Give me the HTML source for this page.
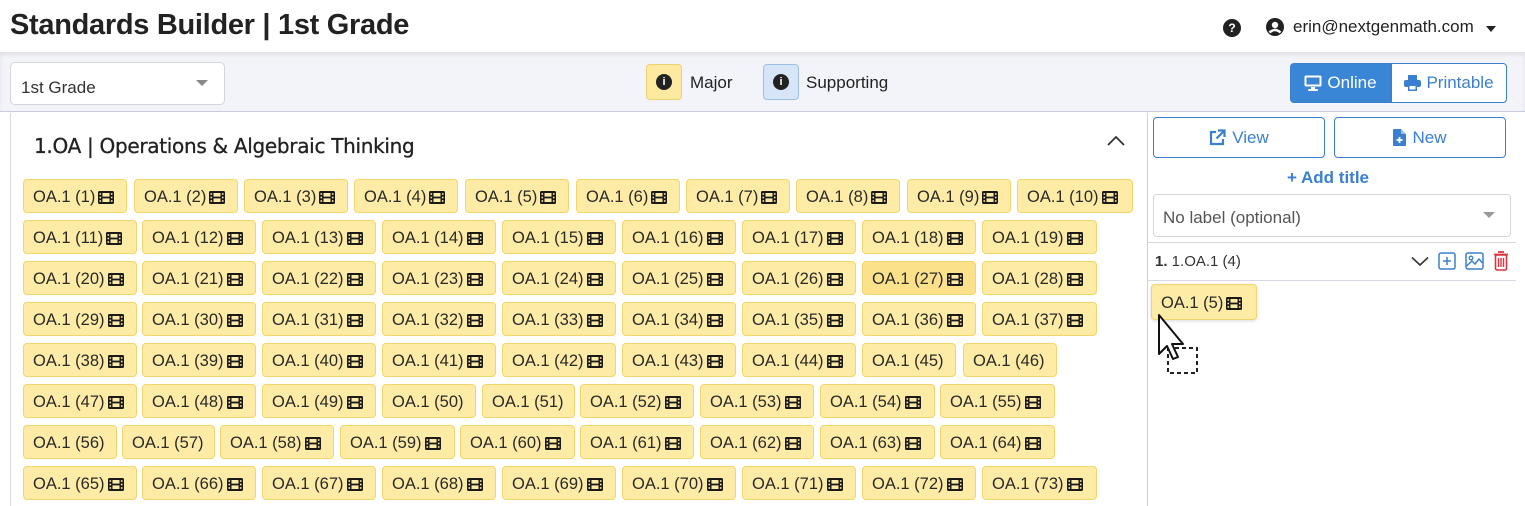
<!DOCTYPE html>
<html><head><meta charset="utf-8"><style>
*{box-sizing:border-box;margin:0;padding:0}
body{width:1525px;height:506px;overflow:hidden;background:#fff;font-family:"Liberation Sans",sans-serif;color:#222;position:relative}
.abs{position:absolute}
.b{position:absolute;height:34px;background:#fdeba6;border:1px solid #f3d56a;border-radius:4px;display:flex;align-items:center;padding-left:9px;padding-top:2px;font-size:16.5px;color:#2a2a2a;white-space:nowrap}
.b.h{background:#fbe18a}
.b svg{margin-left:3px}
.btn{position:absolute;border:1px solid #3a7fd0;border-radius:4px;color:#3a7fd0;font-size:17px;display:flex;align-items:center;justify-content:center;gap:6px;background:#fff}
</style></head><body>
<svg width="0" height="0" style="position:absolute"><defs><symbol id="f" viewBox="0 0 16 13"><rect x="0" y="0" width="16" height="13" rx="1.5" fill="#1a1a1a"/><rect x="4.5" y="2" width="7" height="3.6" fill="#fdeba6"/><rect x="4.5" y="7.4" width="7" height="3.6" fill="#fdeba6"/><rect x="1.5" y="2.2" width="1.6" height="1.6" fill="#fdeba6"/><rect x="1.5" y="5.7" width="1.6" height="1.6" fill="#fdeba6"/><rect x="1.5" y="9.2" width="1.6" height="1.6" fill="#fdeba6"/><rect x="12.9" y="2.2" width="1.6" height="1.6" fill="#fdeba6"/><rect x="12.9" y="5.7" width="1.6" height="1.6" fill="#fdeba6"/><rect x="12.9" y="9.2" width="1.6" height="1.6" fill="#fdeba6"/></symbol></defs></svg>

<div class="abs" style="left:10px;top:9px;font-size:29px;color:#222;font-family:'Liberation Sans',sans-serif;font-weight:bold;letter-spacing:-0.3px">Standards Builder | 1st Grade</div>
<div class="abs" style="left:1223px;top:19px;width:18px;height:18px;border-radius:50%;background:#222;color:#fff;font-size:12px;font-weight:bold;text-align:center;line-height:18px">?</div>
<svg class="abs" style="left:1266px;top:18px" width="18" height="18" viewBox="0 0 18 18"><circle cx="9" cy="9" r="9" fill="#222"/><circle cx="9" cy="7" r="3.2" fill="#fff"/><path d="M3.5 14.5 Q9 9.5 14.5 14.5" stroke="#fff" stroke-width="2.5" fill="none"/></svg>
<div class="abs" style="left:1293px;top:17px;font-size:17px;color:#222">erin@nextgenmath.com</div>
<div class="abs" style="left:1486px;top:26px;border-left:5px solid transparent;border-right:5px solid transparent;border-top:6px solid #222"></div>

<div class="abs" style="left:0;top:52px;width:1525px;height:60px;background:#f3f4f9;box-shadow:inset 0 3px 4px rgba(0,0,0,.08);border-bottom:1px solid #c9cbe0"></div>
<div class="abs" style="left:10px;top:62px;width:215px;height:43px;background:#fff;border:1px solid #d5d5da;border-radius:5px;font-size:17px;padding:15px 0 0 10px;color:#333">1st Grade</div>
<div class="abs" style="left:196px;top:80px;border-left:6px solid transparent;border-right:6px solid transparent;border-top:6px solid #888"></div>
<div class="abs" style="left:646px;top:64px;width:36px;height:36px;background:#fde9a0;border:1px solid #ecd070;border-radius:4px"></div>
<div class="abs" style="left:656px;top:74px;width:16px;height:16px;border-radius:50%;background:#222;color:#fff;font-size:11px;font-weight:bold;text-align:center;line-height:16px">i</div>
<div class="abs" style="left:690px;top:73px;font-size:17px">Major</div>
<div class="abs" style="left:763px;top:64px;width:36px;height:36px;background:#d6e6f8;border:1px solid #9fbfe2;border-radius:4px"></div>
<div class="abs" style="left:773px;top:74px;width:16px;height:16px;border-radius:50%;background:#222;color:#fff;font-size:11px;font-weight:bold;text-align:center;line-height:16px">i</div>
<div class="abs" style="left:806px;top:73px;font-size:17px">Supporting</div>

<div class="abs" style="left:1290px;top:63px;width:101px;height:40px;background:#3a86d6;border:1px solid #3a7fd0;border-radius:4px 0 0 4px;color:#fff;font-size:17px;display:flex;align-items:center;justify-content:center;gap:5px"><svg width="18" height="16" viewBox="0 0 18 16"><rect x="0.5" y="0.5" width="17" height="11" rx="1.5" fill="#fff"/><rect x="2.5" y="2.5" width="13" height="7" fill="#3a86d6"/><rect x="7" y="12" width="4" height="2" fill="#fff"/><rect x="4" y="14" width="10" height="2" rx="1" fill="#fff"/></svg>Online</div>
<div class="abs" style="left:1391px;top:63px;width:116px;height:40px;background:#fff;border:1px solid #3a7fd0;border-radius:0 4px 4px 0;color:#3a7fd0;font-size:17px;display:flex;align-items:center;justify-content:center;gap:5px"><svg width="17" height="16" viewBox="0 0 17 16"><rect x="4" y="0" width="9" height="5" fill="#3a7fd0"/><rect x="0" y="5" width="17" height="7" rx="2" fill="#3a7fd0"/><rect x="4" y="10" width="9" height="6" fill="#3a7fd0"/><rect x="5.5" y="11" width="6" height="3.5" fill="#fff"/></svg>Printable</div>

<div class="abs" style="left:10px;top:113px;width:1138px;height:393px;background:#fff;border-left:1px solid #d8d8e0;border-right:1px solid #d0d0d8"></div>
<div class="abs" style="left:34px;top:134px;font-size:20px;font-family:'DejaVu Sans',sans-serif;color:#222;letter-spacing:-0.3px;-webkit-text-stroke:0.3px #222">1.OA | Operations &amp; Algebraic Thinking</div>
<svg class="abs" style="left:1106px;top:135px" width="20" height="12" viewBox="0 0 20 12"><path d="M2 10 L10 2 L18 10" stroke="#333" stroke-width="1.8" fill="none"/></svg>

<div class="b" style="left:23px;top:179px;width:104px">OA.1 (1)<svg width="16" height="13"><use href="#f"/></svg></div>
<div class="b" style="left:134px;top:179px;width:104px">OA.1 (2)<svg width="16" height="13"><use href="#f"/></svg></div>
<div class="b" style="left:244px;top:179px;width:104px">OA.1 (3)<svg width="16" height="13"><use href="#f"/></svg></div>
<div class="b" style="left:354px;top:179px;width:104px">OA.1 (4)<svg width="16" height="13"><use href="#f"/></svg></div>
<div class="b" style="left:465px;top:179px;width:104px">OA.1 (5)<svg width="16" height="13"><use href="#f"/></svg></div>
<div class="b" style="left:576px;top:179px;width:104px">OA.1 (6)<svg width="16" height="13"><use href="#f"/></svg></div>
<div class="b" style="left:686px;top:179px;width:104px">OA.1 (7)<svg width="16" height="13"><use href="#f"/></svg></div>
<div class="b" style="left:796px;top:179px;width:104px">OA.1 (8)<svg width="16" height="13"><use href="#f"/></svg></div>
<div class="b" style="left:907px;top:179px;width:104px">OA.1 (9)<svg width="16" height="13"><use href="#f"/></svg></div>
<div class="b" style="left:1017px;top:179px;width:116px">OA.1 (10)<svg width="16" height="13"><use href="#f"/></svg></div>

<div class="b" style="left:23px;top:220px;width:114px">OA.1 (11)<svg width="16" height="13"><use href="#f"/></svg></div>
<div class="b" style="left:142px;top:220px;width:114px">OA.1 (12)<svg width="16" height="13"><use href="#f"/></svg></div>
<div class="b" style="left:262px;top:220px;width:114px">OA.1 (13)<svg width="16" height="13"><use href="#f"/></svg></div>
<div class="b" style="left:382px;top:220px;width:114px">OA.1 (14)<svg width="16" height="13"><use href="#f"/></svg></div>
<div class="b" style="left:502px;top:220px;width:114px">OA.1 (15)<svg width="16" height="13"><use href="#f"/></svg></div>
<div class="b" style="left:622px;top:220px;width:114px">OA.1 (16)<svg width="16" height="13"><use href="#f"/></svg></div>
<div class="b" style="left:742px;top:220px;width:114px">OA.1 (17)<svg width="16" height="13"><use href="#f"/></svg></div>
<div class="b" style="left:862px;top:220px;width:114px">OA.1 (18)<svg width="16" height="13"><use href="#f"/></svg></div>
<div class="b" style="left:982px;top:220px;width:115px">OA.1 (19)<svg width="16" height="13"><use href="#f"/></svg></div>

<div class="b" style="left:23px;top:261px;width:114px">OA.1 (20)<svg width="16" height="13"><use href="#f"/></svg></div>
<div class="b" style="left:142px;top:261px;width:114px">OA.1 (21)<svg width="16" height="13"><use href="#f"/></svg></div>
<div class="b" style="left:262px;top:261px;width:114px">OA.1 (22)<svg width="16" height="13"><use href="#f"/></svg></div>
<div class="b" style="left:382px;top:261px;width:114px">OA.1 (23)<svg width="16" height="13"><use href="#f"/></svg></div>
<div class="b" style="left:502px;top:261px;width:114px">OA.1 (24)<svg width="16" height="13"><use href="#f"/></svg></div>
<div class="b" style="left:622px;top:261px;width:114px">OA.1 (25)<svg width="16" height="13"><use href="#f"/></svg></div>
<div class="b" style="left:742px;top:261px;width:114px">OA.1 (26)<svg width="16" height="13"><use href="#f"/></svg></div>
<div class="b h" style="left:862px;top:261px;width:114px">OA.1 (27)<svg width="16" height="13"><use href="#f"/></svg></div>
<div class="b" style="left:982px;top:261px;width:115px">OA.1 (28)<svg width="16" height="13"><use href="#f"/></svg></div>

<div class="b" style="left:23px;top:302px;width:114px">OA.1 (29)<svg width="16" height="13"><use href="#f"/></svg></div>
<div class="b" style="left:142px;top:302px;width:114px">OA.1 (30)<svg width="16" height="13"><use href="#f"/></svg></div>
<div class="b" style="left:262px;top:302px;width:114px">OA.1 (31)<svg width="16" height="13"><use href="#f"/></svg></div>
<div class="b" style="left:382px;top:302px;width:114px">OA.1 (32)<svg width="16" height="13"><use href="#f"/></svg></div>
<div class="b" style="left:502px;top:302px;width:114px">OA.1 (33)<svg width="16" height="13"><use href="#f"/></svg></div>
<div class="b" style="left:622px;top:302px;width:114px">OA.1 (34)<svg width="16" height="13"><use href="#f"/></svg></div>
<div class="b" style="left:742px;top:302px;width:114px">OA.1 (35)<svg width="16" height="13"><use href="#f"/></svg></div>
<div class="b" style="left:862px;top:302px;width:114px">OA.1 (36)<svg width="16" height="13"><use href="#f"/></svg></div>
<div class="b" style="left:982px;top:302px;width:115px">OA.1 (37)<svg width="16" height="13"><use href="#f"/></svg></div>

<div class="b" style="left:23px;top:343px;width:114px">OA.1 (38)<svg width="16" height="13"><use href="#f"/></svg></div>
<div class="b" style="left:142px;top:343px;width:114px">OA.1 (39)<svg width="16" height="13"><use href="#f"/></svg></div>
<div class="b" style="left:262px;top:343px;width:114px">OA.1 (40)<svg width="16" height="13"><use href="#f"/></svg></div>
<div class="b" style="left:382px;top:343px;width:114px">OA.1 (41)<svg width="16" height="13"><use href="#f"/></svg></div>
<div class="b" style="left:502px;top:343px;width:114px">OA.1 (42)<svg width="16" height="13"><use href="#f"/></svg></div>
<div class="b" style="left:622px;top:343px;width:114px">OA.1 (43)<svg width="16" height="13"><use href="#f"/></svg></div>
<div class="b" style="left:742px;top:343px;width:114px">OA.1 (44)<svg width="16" height="13"><use href="#f"/></svg></div>
<div class="b" style="left:862px;top:343px;width:94px">OA.1 (45)</div>
<div class="b" style="left:963px;top:343px;width:94px">OA.1 (46)</div>

<div class="b" style="left:23px;top:384px;width:114px">OA.1 (47)<svg width="16" height="13"><use href="#f"/></svg></div>
<div class="b" style="left:142px;top:384px;width:114px">OA.1 (48)<svg width="16" height="13"><use href="#f"/></svg></div>
<div class="b" style="left:262px;top:384px;width:114px">OA.1 (49)<svg width="16" height="13"><use href="#f"/></svg></div>
<div class="b" style="left:382px;top:384px;width:94px">OA.1 (50)</div>
<div class="b" style="left:482px;top:384px;width:93px">OA.1 (51)</div>
<div class="b" style="left:580px;top:384px;width:114px">OA.1 (52)<svg width="16" height="13"><use href="#f"/></svg></div>
<div class="b" style="left:700px;top:384px;width:114px">OA.1 (53)<svg width="16" height="13"><use href="#f"/></svg></div>
<div class="b" style="left:820px;top:384px;width:115px">OA.1 (54)<svg width="16" height="13"><use href="#f"/></svg></div>
<div class="b" style="left:940px;top:384px;width:115px">OA.1 (55)<svg width="16" height="13"><use href="#f"/></svg></div>

<div class="b" style="left:23px;top:425px;width:94px">OA.1 (56)</div>
<div class="b" style="left:122px;top:425px;width:93px">OA.1 (57)</div>
<div class="b" style="left:220px;top:425px;width:114px">OA.1 (58)<svg width="16" height="13"><use href="#f"/></svg></div>
<div class="b" style="left:340px;top:425px;width:115px">OA.1 (59)<svg width="16" height="13"><use href="#f"/></svg></div>
<div class="b" style="left:460px;top:425px;width:115px">OA.1 (60)<svg width="16" height="13"><use href="#f"/></svg></div>
<div class="b" style="left:580px;top:425px;width:114px">OA.1 (61)<svg width="16" height="13"><use href="#f"/></svg></div>
<div class="b" style="left:700px;top:425px;width:114px">OA.1 (62)<svg width="16" height="13"><use href="#f"/></svg></div>
<div class="b" style="left:820px;top:425px;width:115px">OA.1 (63)<svg width="16" height="13"><use href="#f"/></svg></div>
<div class="b" style="left:940px;top:425px;width:115px">OA.1 (64)<svg width="16" height="13"><use href="#f"/></svg></div>

<div class="b" style="left:23px;top:466px;width:114px">OA.1 (65)<svg width="16" height="13"><use href="#f"/></svg></div>
<div class="b" style="left:142px;top:466px;width:114px">OA.1 (66)<svg width="16" height="13"><use href="#f"/></svg></div>
<div class="b" style="left:262px;top:466px;width:114px">OA.1 (67)<svg width="16" height="13"><use href="#f"/></svg></div>
<div class="b" style="left:382px;top:466px;width:114px">OA.1 (68)<svg width="16" height="13"><use href="#f"/></svg></div>
<div class="b" style="left:502px;top:466px;width:114px">OA.1 (69)<svg width="16" height="13"><use href="#f"/></svg></div>
<div class="b" style="left:622px;top:466px;width:114px">OA.1 (70)<svg width="16" height="13"><use href="#f"/></svg></div>
<div class="b" style="left:742px;top:466px;width:114px">OA.1 (71)<svg width="16" height="13"><use href="#f"/></svg></div>
<div class="b" style="left:862px;top:466px;width:114px">OA.1 (72)<svg width="16" height="13"><use href="#f"/></svg></div>
<div class="b" style="left:982px;top:466px;width:115px">OA.1 (73)<svg width="16" height="13"><use href="#f"/></svg></div>

<div class="btn" style="left:1153px;top:117px;width:172px;height:41px"><svg width="17" height="17" viewBox="0 0 17 17"><path d="M7 3 H2 V15 H14 V10" stroke="#3a7fd0" stroke-width="2.2" fill="none"/><path d="M9 1.5 H15.5 V8" stroke="#3a7fd0" stroke-width="2.2" fill="none"/><path d="M15 2 L7.5 9.5" stroke="#3a7fd0" stroke-width="2.2"/></svg>View</div>
<div class="btn" style="left:1334px;top:117px;width:172px;height:41px"><svg width="13" height="17" viewBox="0 0 13 17"><path d="M0 1 Q0 0 1 0 H8 L13 5 V16 Q13 17 12 17 H1 Q0 17 0 16 Z" fill="#3a7fd0"/><path d="M8 0 V5 H13" fill="#fff" opacity=".5"/><path d="M6.5 8 V14 M3.5 11 H9.5" stroke="#fff" stroke-width="1.8"/></svg>New</div>
<div class="abs" style="left:1287px;top:168px;font-size:17px;font-weight:bold;color:#3a7fd0">+ Add title</div>
<div class="abs" style="left:1153px;top:194px;width:358px;height:43px;border:1px solid #d5d5da;border-radius:4px;font-size:17px;color:#555;padding:13px 0 0 9px">No label (optional)</div>
<div class="abs" style="left:1483px;top:212px;border-left:6px solid transparent;border-right:6px solid transparent;border-top:6px solid #999"></div>
<div class="abs" style="left:1148px;top:242px;width:368px;height:1px;background:#d8d8e2"></div>
<div class="abs" style="left:1155px;top:253px;font-size:15px;color:#333"><b>1.</b> 1.OA.1 (4)</div>
<svg class="abs" style="left:1411px;top:256px" width="18" height="11" viewBox="0 0 18 11"><path d="M1 1.5 L9 9 L17 1.5" stroke="#333" stroke-width="1.6" fill="none"/></svg>
<svg class="abs" style="left:1438px;top:252px" width="18" height="18" viewBox="0 0 18 18"><rect x="1" y="1" width="16" height="16" rx="2" stroke="#3a7fd0" stroke-width="1.5" fill="none"/><path d="M9 5 V13 M5 9 H13" stroke="#3a7fd0" stroke-width="1.5"/></svg>
<svg class="abs" style="left:1465px;top:252px" width="19" height="18" viewBox="0 0 19 18"><rect x="1" y="1" width="17" height="16" rx="2" stroke="#3a7fd0" stroke-width="1.5" fill="none"/><circle cx="6" cy="6" r="1.8" stroke="#3a7fd0" stroke-width="1.3" fill="none"/><path d="M1.5 14 L7 9 L10 12 L14 7 L17.5 11" stroke="#3a7fd0" stroke-width="1.5" fill="none"/></svg>
<svg class="abs" style="left:1493px;top:251px" width="16" height="20" viewBox="0 0 16 20"><path d="M5 1 H11 M1 3.5 H15" stroke="#d9343f" stroke-width="1.8"/><rect x="2.5" y="4" width="11" height="15" rx="1.5" stroke="#d9343f" stroke-width="1.6" fill="none"/><path d="M5.5 7 V16 M8 7 V16 M10.5 7 V16" stroke="#d9343f" stroke-width="1.4"/></svg>
<div class="abs" style="left:1148px;top:280px;width:368px;height:1px;background:#d8d8e2"></div>
<div class="b" style="left:1151px;top:284px;width:106px;height:36px;box-shadow:0 1px 3px rgba(0,0,0,.15)">OA.1 (5)<svg width="16" height="13"><use href="#f"/></svg></div>
<svg class="abs" style="left:1155px;top:312px" width="48" height="64" viewBox="0 0 48 64"><rect x="13" y="36" width="29" height="25" stroke="#222" stroke-width="2" stroke-dasharray="4 3" fill="none"/><path d="M4 3 V42 L12 34 L18 47 L23 45 L17 32 L28 32 Z" fill="#fff" stroke="#111" stroke-width="2" stroke-linejoin="round"/></svg>
</body></html>
